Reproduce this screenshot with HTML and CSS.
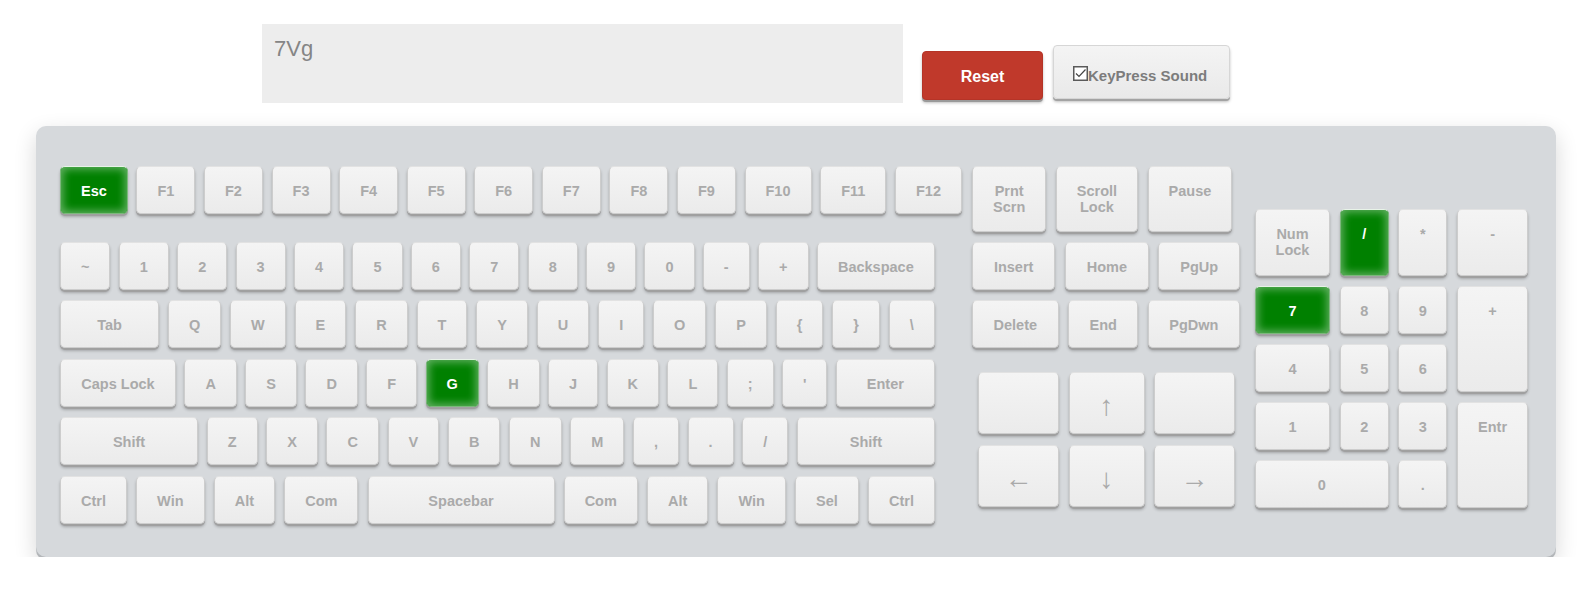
FILE: index.html
```html
<!DOCTYPE html>
<html lang="en">
<head>
    <meta charset="UTF-8">
    <meta name="viewport" content="width=device-width, initial-scale=1.0">
    <title>Keyboard</title>
    <link rel="stylesheet" href="styles.css">
</head>
<body>
    <!-- typed text and controls -->
    <div class="top">
        <textarea class="output" readonly>7Vg</textarea>
        <div class="controls">
            <button type="button" class="btn btn-reset">Reset</button>
            <button type="button" class="btn btn-sound">
                <svg class="check" width="15" height="15" viewBox="0 0 15 15">
                    <rect x="0.75" y="0.75" width="13.5" height="13.5" fill="#fff" stroke="#5a5a5a" stroke-width="1.5"/>
                    <path d="M3 7.5 L6 10.5 L12.5 3.5" fill="none" stroke="#444" stroke-width="1.2"/>
                </svg>KeyPress Sound
            </button>
        </div>
    </div>

    <!-- keyboard -->
    <div class="keyboard">
        <div class="left">
            <div class="fn-row">
                <div class="fn">
                    <div class="key on">Esc</div>
                    <div class="key">F1</div>
                    <div class="key">F2</div>
                    <div class="key">F3</div>
                    <div class="key">F4</div>
                    <div class="key">F5</div>
                    <div class="key">F6</div>
                    <div class="key">F7</div>
                    <div class="key">F8</div>
                    <div class="key">F9</div>
                    <div class="key">F10</div>
                    <div class="key">F11</div>
                    <div class="key">F12</div>
                </div>
                <div class="sys">
                    <div class="key tall">Prnt<br>Scrn</div>
                    <div class="key tall">Scroll<br>Lock</div>
                    <div class="key tall">Pause</div>
                </div>
            </div>

            <div class="lower">
                <div class="main">
                    <div class="row">
                        <div class="key">~</div>
                        <div class="key">1</div>
                        <div class="key">2</div>
                        <div class="key">3</div>
                        <div class="key">4</div>
                        <div class="key">5</div>
                        <div class="key">6</div>
                        <div class="key">7</div>
                        <div class="key">8</div>
                        <div class="key">9</div>
                        <div class="key">0</div>
                        <div class="key">-</div>
                        <div class="key">+</div>
                        <div class="key w-back">Backspace</div>
                    </div>
                    <div class="row">
                        <div class="key w-tab">Tab</div>
                        <div class="key">Q</div>
                        <div class="key">W</div>
                        <div class="key">E</div>
                        <div class="key">R</div>
                        <div class="key">T</div>
                        <div class="key">Y</div>
                        <div class="key">U</div>
                        <div class="key">I</div>
                        <div class="key">O</div>
                        <div class="key">P</div>
                        <div class="key">{</div>
                        <div class="key">}</div>
                        <div class="key">\</div>
                    </div>
                    <div class="row">
                        <div class="key w-caps">Caps Lock</div>
                        <div class="key">A</div>
                        <div class="key">S</div>
                        <div class="key">D</div>
                        <div class="key">F</div>
                        <div class="key on">G</div>
                        <div class="key">H</div>
                        <div class="key">J</div>
                        <div class="key">K</div>
                        <div class="key">L</div>
                        <div class="key">;</div>
                        <div class="key">'</div>
                        <div class="key w-enter">Enter</div>
                    </div>
                    <div class="row">
                        <div class="key w-shift">Shift</div>
                        <div class="key">Z</div>
                        <div class="key">X</div>
                        <div class="key">C</div>
                        <div class="key">V</div>
                        <div class="key">B</div>
                        <div class="key">N</div>
                        <div class="key">M</div>
                        <div class="key">,</div>
                        <div class="key">.</div>
                        <div class="key">/</div>
                        <div class="key w-shift">Shift</div>
                    </div>
                    <div class="row">
                        <div class="key">Ctrl</div>
                        <div class="key">Win</div>
                        <div class="key">Alt</div>
                        <div class="key">Com</div>
                        <div class="key w-space">Spacebar</div>
                        <div class="key">Com</div>
                        <div class="key">Alt</div>
                        <div class="key">Win</div>
                        <div class="key">Sel</div>
                        <div class="key">Ctrl</div>
                    </div>
                </div>

                <div class="nav">
                    <div class="nav-row">
                        <div class="key">Insert</div>
                        <div class="key">Home</div>
                        <div class="key">PgUp</div>
                    </div>
                    <div class="nav-row">
                        <div class="key">Delete</div>
                        <div class="key">End</div>
                        <div class="key">PgDwn</div>
                    </div>
                    <div class="arrows">
                        <div class="key arrow"></div>
                        <div class="key arrow">&uarr;</div>
                        <div class="key arrow"></div>
                        <div class="key arrow">&larr;</div>
                        <div class="key arrow">&darr;</div>
                        <div class="key arrow">&rarr;</div>
                    </div>
                </div>
            </div>
        </div>

        <div class="numpad">
            <div class="key">Num<br>Lock</div>
            <div class="key on">/</div>
            <div class="key">*</div>
            <div class="key">-</div>
            <div class="key on">7</div>
            <div class="key">8</div>
            <div class="key">9</div>
            <div class="key span-rows">+</div>
            <div class="key">4</div>
            <div class="key">5</div>
            <div class="key">6</div>
            <div class="key">1</div>
            <div class="key">2</div>
            <div class="key">3</div>
            <div class="key span-rows">Entr</div>
            <div class="key span-cols">0</div>
            <div class="key">.</div>
        </div>
    </div>
</body>
</html>
```

FILE: styles.css
```css
body {
    margin: 0;
    background: #fff;
    font-family: "Liberation Sans", Arial, sans-serif;
}
.top {
    display: flex;
    align-items: flex-start;
    padding: 24px 0 0 262px;
}
.output {
    box-sizing: border-box;
    width: 641px;
    height: 79px;
    padding: 12px 12px;
    border: none;
    outline: none;
    resize: none;
    background: #ededed;
    color: #858585;
    font-family: "Liberation Sans", Arial, sans-serif;
    font-size: 22px;
}
.controls {
    display: flex;
    align-items: flex-start;
    gap: 10px;
    margin-left: 19px;
    padding-top: 21px;
}
.btn {
    box-sizing: border-box;
    border-radius: 4px;
    font-family: "Liberation Sans", Arial, sans-serif;
    font-weight: bold;
    cursor: pointer;
}
.btn-reset {
    width: 121px;
    height: 49px;
    margin-top: 6px;
    padding-top: 4px;
    border: 1px solid #b53427;
    background: #c0392b;
    color: #fff;
    font-size: 16px;
    box-shadow: 0 2px 0 #9a9a9a, 0 3px 3px rgba(0, 0, 0, 0.25);
}
.btn-sound {
    display: flex;
    align-items: center;
    width: 177px;
    height: 54px;
    padding: 6px 0 0 19px;
    border: 1px solid #d6d6d6;
    background: linear-gradient(#f4f4f4, #e9e9e9);
    color: #7c7c7c;
    font-size: 15px;
    box-shadow: 0 2px 0 #a3a3a3, 0 3px 3px rgba(0, 0, 0, 0.25);
}
.check {
    margin-top: -4px;
}

.keyboard {
    box-sizing: border-box;
    display: flex;
    align-items: flex-start;
    width: 1520px;
    height: 431px;
    margin: 23px 0 0 36px;
    padding: 40px 0 0 24px;
    border-radius: 10px;
    background: #d6d9dc;
    box-shadow: 0 3px 0 #b3b6b9, 0 8px 22px rgba(0, 0, 0, 0.16);
}
.left {
    width: 1180px;
}
.fn-row {
    display: flex;
    align-items: flex-start;
    gap: 10px;
}
.fn {
    display: flex;
    justify-content: space-between;
    width: 902px;
}
.sys {
    display: flex;
    gap: 9.5px;
}
.lower {
    display: flex;
    margin-top: 10px;
}
.main {
    display: flex;
    flex-direction: column;
    gap: 10.4px;
    width: 875px;
}
.row {
    display: flex;
    justify-content: space-between;
}
.nav {
    width: 268px;
    margin-left: 37px;
}
.nav-row {
    display: flex;
    gap: 9.4px;
    margin-bottom: 10.4px;
}
.nav-row .key {
    flex: 1 1 auto;
}
.arrows {
    display: grid;
    grid-template-columns: 81px 76px 81px;
    grid-auto-rows: 62px;
    gap: 10.7px 9.5px;
    margin: 24px 0 0 6px;
}
.numpad {
    display: grid;
    grid-template-columns: 75px 49px 49px 71px;
    grid-template-rows: 67px repeat(4, 48px);
    gap: 10px 9.7px;
    margin: 43px 0 0 15px;
}
.numpad .key {
    height: auto;
    padding: 16px 0 0;
}
.span-rows {
    grid-row: span 2;
}
.span-cols {
    grid-column: span 2;
}

.key {
    box-sizing: border-box;
    height: 48px;
    padding: 16px 20px 0;
    border: 1px solid #cdcdcd;
    border-top-color: #e2e2e2;
    border-radius: 5px;
    background: linear-gradient(#f4f4f4, #ebebeb);
    box-shadow: 0 2px 0 #a0a0a0, 0 3px 3px rgba(0, 0, 0, 0.24);
    color: #aaa;
    font-size: 14.5px;
    font-weight: bold;
    line-height: 16px;
    text-align: center;
    white-space: nowrap;
}
.key.tall {
    height: 66px;
}
.key.on {
    border-color: #7cb87c;
    border-top-color: #e8f3e8;
    background: #008000;
    color: #fff;
    box-shadow: inset 0 0 9px 2px rgba(255, 255, 255, 0.4), 0 2px 0 #a0a0a0, 0 3px 3px rgba(0, 0, 0, 0.24);
}
.key.arrow {
    height: 62px;
    padding: 19px 0 0;
    font-size: 28px;
    font-weight: normal;
    line-height: 28px;
}
.w-back {
    width: 118px;
}
.w-tab {
    width: 99px;
}
.w-caps {
    width: 116px;
}
.w-enter {
    width: 99px;
}
.w-shift {
    width: 138px;
}
.w-space {
    width: 187px;
}
```
